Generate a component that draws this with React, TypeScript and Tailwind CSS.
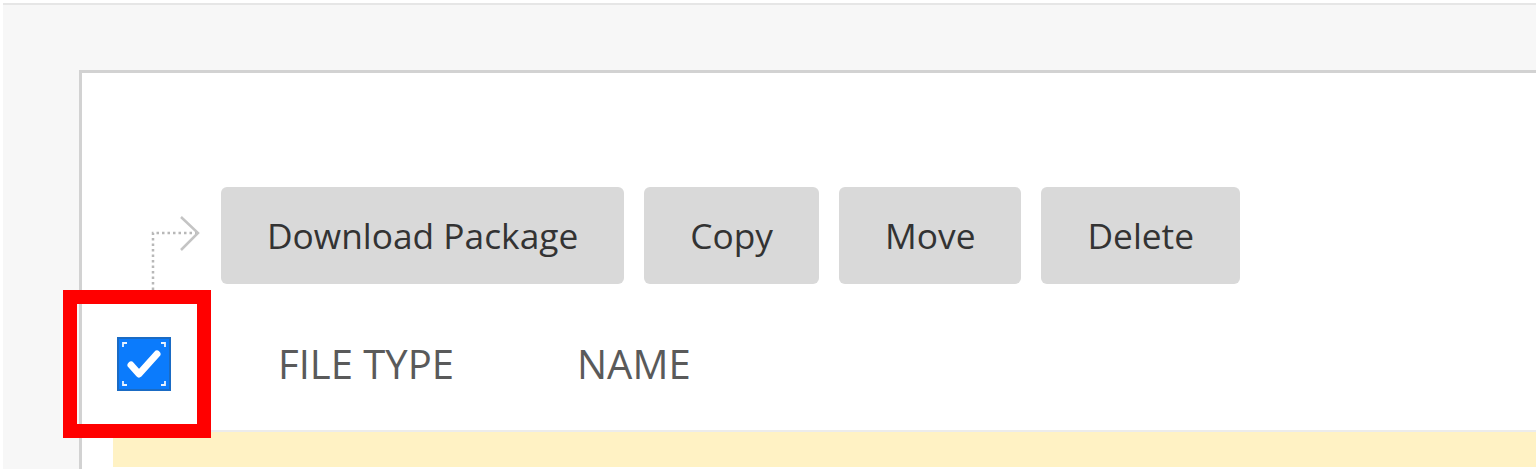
import React from "react";

const buttons = ["Download Package", "Copy", "Move", "Delete"];

function Arrow() {
  return (
    <svg width="62" height="90" viewBox="0 0 62 90" className="absolute left-[-76px] top-[23px] overflow-visible">
      <path d="M8 80 L8 23 L52 23" fill="none" stroke="#b8b8b8" strokeWidth="2.5" strokeDasharray="2.5 3" />
      <path d="M36 7 L53 23 L36 40" fill="none" stroke="#c4c4c4" strokeWidth="2.5" />
    </svg>
  );
}

function Checkbox() {
  return (
    <div className="relative w-[54px] h-[54px] bg-[#0b7bfc] border-2 border-[#1a6bc4]">
      <svg width="54" height="54" viewBox="0 0 54 54" className="absolute left-[-2px] top-[-2px]">
        <path d="M6 10 V6 H10 M44 6 H48 V10 M48 44 V48 H44 M10 48 H6 V44" fill="none" stroke="#ffffff" strokeOpacity="0.9" strokeWidth="1.8" />
        <path d="M14 28 L22 37 L40 17" fill="none" stroke="#ffffff" strokeWidth="7" strokeLinecap="round" strokeLinejoin="round" />
      </svg>
    </div>
  );
}

export default function App() {
  return (
    <div
      className="relative w-full h-[469px] overflow-hidden bg-white"
      style={{ fontFamily: '"Open Sans", "Noto Sans", sans-serif' }}
    >
      <div className="ml-[3px] mt-[3px] border-t-2 border-[#e6e6e6] bg-[#f7f7f7] pt-[65px] pl-[76px] h-[470px]">
        <div className="border-t-[3px] border-l-[3px] border-[#d2d2d2] bg-white h-full">
          <div className="relative ml-[139px] pt-[114px]">
            <div className="relative flex gap-5">
              <Arrow />
              {buttons.map((b) => (
                <div
                  key={b}
                  className="h-[97px] px-[46px] flex items-center rounded-md bg-[#d9d9d9] text-[35.3px] text-[#333333] leading-none"
                >
                  {b}
                </div>
              ))}
            </div>
          </div>
          <div className="flex items-center pl-[35px] pt-[53px] pb-[39px] border-b-2 border-[#ececec]">
            <Checkbox />
            <div className="ml-[107px] w-[299px] text-[40px] text-[#5a5a5a] leading-none">FILE TYPE</div>
            <div className="text-[40px] text-[#5a5a5a] leading-none">NAME</div>
          </div>
          <div className="ml-[31px] h-[35px] bg-[#fff2c4]" />
        </div>
      </div>
      <div className="absolute left-[63px] top-[290px] w-[148px] h-[148px] border-[14px] border-[#ff0000]" />
    </div>
  );
}
